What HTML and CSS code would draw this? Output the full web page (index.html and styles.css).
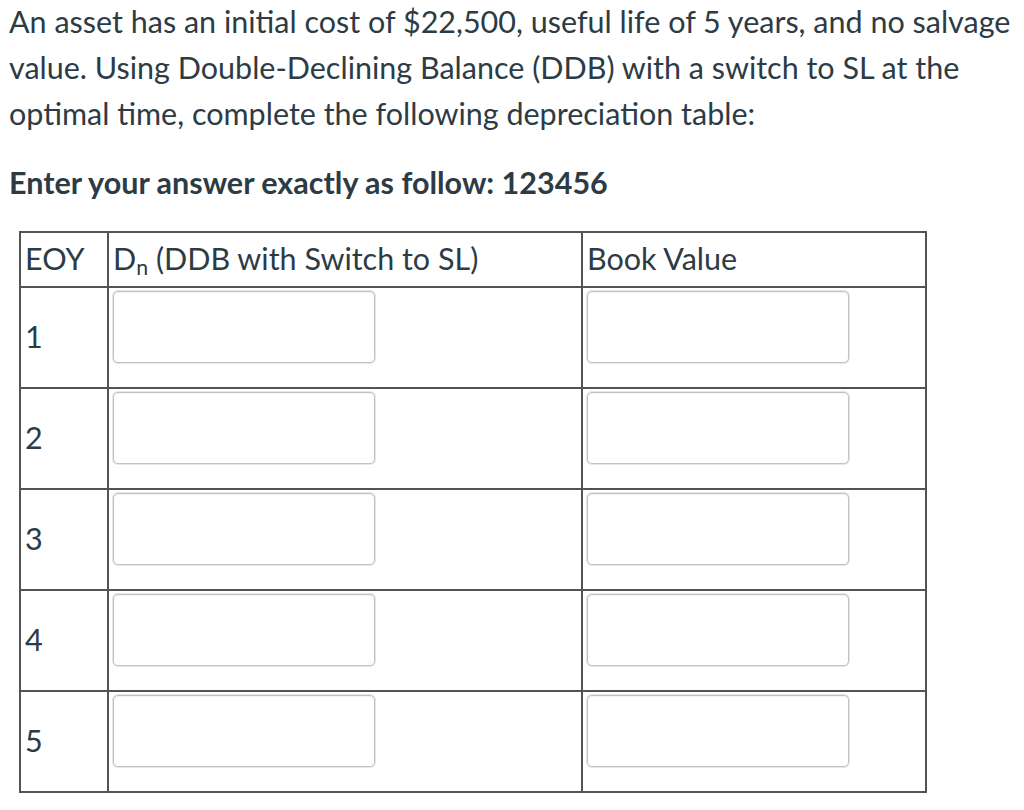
FILE: index.html
```html
<!DOCTYPE html>
<html>
<head>
<meta charset="utf-8">
<link rel="stylesheet" href="styles.css">
</head>
<body>
<div class="question">
  <p class="intro">An asset has an initial cost of $22,500, useful life of 5 years, and no salvage value. Using Double-Declining Balance (DDB) with a switch to SL at the optimal time, complete the following depreciation table:</p>
  <p class="note"><strong>Enter your answer exactly as follow: 123456</strong></p>
  <table class="dep">
    <thead>
      <tr>
        <th class="c1">EOY</th>
        <th class="c2">D<sub>n</sub> (DDB with Switch to SL)</th>
        <th class="c3">Book Value</th>
      </tr>
    </thead>
    <tbody>
      <tr><td>1</td><td><input type="text" class="ans"></td><td><input type="text" class="ans"></td></tr>
      <tr><td>2</td><td><input type="text" class="ans"></td><td><input type="text" class="ans"></td></tr>
      <tr><td>3</td><td><input type="text" class="ans"></td><td><input type="text" class="ans"></td></tr>
      <tr><td>4</td><td><input type="text" class="ans"></td><td><input type="text" class="ans"></td></tr>
      <tr><td>5</td><td><input type="text" class="ans"></td><td><input type="text" class="ans"></td></tr>
    </tbody>
  </table>
</div>
</body>
</html>
```
FILE: styles.css
```css
html, body {
  margin: 0;
  padding: 0;
  background: #fff;
}
body {
  font-family: Lato, "Noto Sans", sans-serif;
  font-size: 30.5px;
  line-height: 46px;
  color: #2d3b45;
}
.question {
  padding: 0 0 0 9px;
}
.intro {
  margin: -2px 0 0 0;
  width: 1012px;
}
.note {
  margin: 23px 0 0 0;
}
.note strong {
  font-weight: 700;
}
.dep {
  margin: 26px 0 0 10px;
  border-collapse: collapse;
  border: 2px solid #535353;
  width: 908px;
}
.dep th, .dep td {
  border: 2px solid #535353;
  text-align: left;
  vertical-align: middle;
  font-weight: 400;
  padding: 0 4px;
}
.dep th {
  height: 49px;
  padding-top: 0;
  padding-bottom: 4px;
}
.dep .c1 { width: 78px; }
.dep .c2 { width: 464px; }
.dep td {
  padding-top: 3px;
  padding-bottom: 0;
}
.dep td:first-child {
  padding-bottom: 6px;
}
.dep sub {
  font-size: 0.7em;
  vertical-align: -0.25em;
  line-height: 0;
}
.ans {
  display: block;
  box-sizing: border-box;
  width: 262px;
  height: 72px;
  margin: 0 0 24px 0;
  border: 1px solid #c2c2c2;
  box-shadow: 0 0 0 1px #e6e6e6, inset 0 1px 1px rgba(0,0,0,0.05);
  border-radius: 5px;
  background: #fff;
  padding: 4px 8px;
  font: inherit;
}
```
